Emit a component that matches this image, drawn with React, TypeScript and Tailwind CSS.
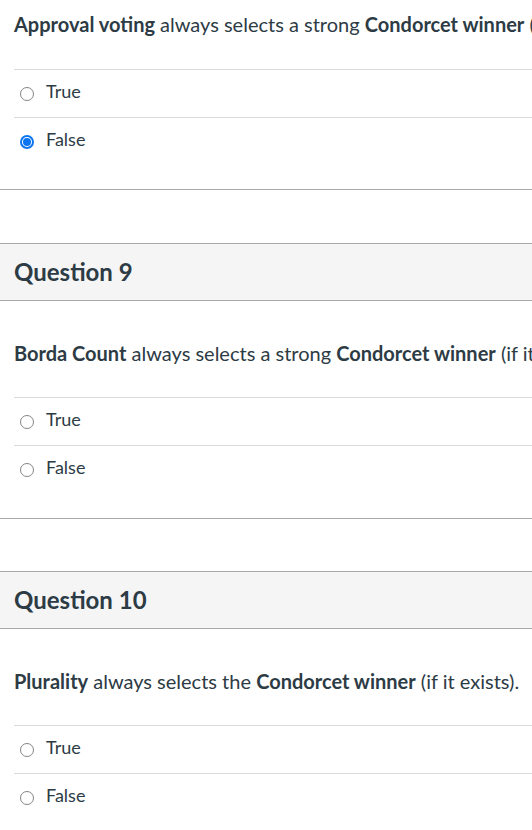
const FONT = { fontFamily: "Lato, 'Noto Sans', sans-serif" };

type Answer = { label: string; checked?: boolean };

function Radio({ checked }: { checked?: boolean }) {
  if (checked) {
    return (
      <span className="flex h-[14px] w-[14px] shrink-0 items-center justify-center rounded-full border-2 border-[#0b74f0]">
        <span className="h-[8px] w-[8px] rounded-full bg-[#0b74f0]" />
      </span>
    );
  }
  return <span className="h-[14px] w-[14px] shrink-0 rounded-full border border-[#858585] bg-white" />;
}

function Answers({ items }: { items: Answer[] }) {
  return (
    <div>
      {items.map((a) => (
        <div key={a.label} className="flex h-[48px] items-center gap-[12px] border-t border-[#dcdcdc] pl-[6px] text-[18px]">
          <Radio checked={a.checked} />
          <span className="-mt-[4px]">{a.label}</span>
        </div>
      ))}
    </div>
  );
}

function Header({ title }: { title: string }) {
  return (
    <div className="flex h-[58px] items-center border-y border-[#a9a9a9] bg-[#f5f5f5] px-[14px]">
      <h2 className="text-[24px] font-bold leading-none">{title}</h2>
    </div>
  );
}

export default function App() {
  return (
    <div className="w-[532px] overflow-hidden bg-white text-[#2d3b45]" style={FONT}>
      <div className="w-[900px]">
        <div className="border-b border-[#a9a9a9]">
          <div className="px-[14px] pb-[24px]">
            <p className="whitespace-nowrap pt-[10px] pb-[31px] text-[20px] leading-[28px]">
              <b>Approval voting</b> always selects a strong <b>Condorcet winner</b> (if it exists).
            </p>
            <Answers items={[{ label: "True" }, { label: "False", checked: true }]} />
          </div>
        </div>

        <div className="mt-[53px] border-b border-[#a9a9a9]">
          <Header title="Question 9" />
          <div className="px-[14px] pb-[25px]">
            <p className="whitespace-nowrap pt-[38px] pb-[30px] text-[20px] leading-[28px]">
              <b>Borda Count</b> always selects a strong <b>Condorcet winner</b> (if it exists).
            </p>
            <Answers items={[{ label: "True" }, { label: "False" }]} />
          </div>
        </div>

        <div className="mt-[52px]">
          <Header title="Question 10" />
          <div className="px-[14px] pb-[26px]">
            <p className="whitespace-nowrap pt-[38px] pb-[30px] text-[20px] leading-[28px]">
              <b>Plurality</b> always selects the <b>Condorcet winner</b> (if it exists).
            </p>
            <Answers items={[{ label: "True" }, { label: "False" }]} />
          </div>
        </div>
      </div>
    </div>
  );
}
